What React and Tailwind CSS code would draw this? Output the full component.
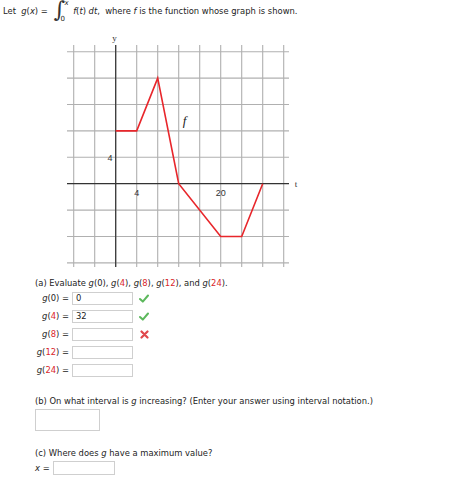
import React from 'react';

const R = ({ children }) => <span className="text-[#d9262b]">{children}</span>;
const G = () => <i>g</i>;

const Check = () => (
  <svg width="10" height="9" viewBox="0 0 10 9">
    <path d="M1 5 L3.8 7.6 L9 1.5" fill="none" stroke="#5cb85c" strokeWidth="2" strokeLinecap="round" strokeLinejoin="round" />
  </svg>
);

const Cross = () => (
  <svg width="9" height="9" viewBox="0 0 9 9">
    <path d="M1.5 1.5 L7.5 7.5 M7.5 1.5 L1.5 7.5" fill="none" stroke="#e0474c" strokeWidth="2.2" strokeLinecap="round" />
  </svg>
);

function Graph() {
  const vx = [73.7, 94.7, 115.7, 136.7, 157.7, 178.7, 199.7, 220.7, 241.7, 262.7, 283.7];
  const hy = [51.7, 78.1, 104.5, 130.9, 157.3, 210.1, 236.5, 262.9];
  return (
    <svg width="250" height="240" viewBox="60 30 250 240" className="block ml-[60px]">
      {vx.map(x => (
        <line key={'v' + x} x1={x} y1="45" x2={x} y2="267" stroke="#b0b0b0" strokeWidth="1.1" />
      ))}
      {hy.map(y => (
        <line key={'h' + y} x1="67" y1={y} x2="289" y2={y} stroke="#b0b0b0" strokeWidth="1.1" />
      ))}
      <line x1="115.7" y1="45" x2="115.7" y2="267" stroke="#333" strokeWidth="1.2" />
      <line x1="67" y1="183.7" x2="289" y2="183.7" stroke="#333" strokeWidth="1.2" />
      <polyline
        points="115.7,130.9 136.7,130.9 157.7,78.1 178.7,183.7 220.7,236.5 241.7,236.5 262.7,183.7"
        fill="none"
        stroke="#e8262b"
        strokeWidth="1.6"
        strokeLinejoin="miter"
      />
      <text x="114.5" y="41" fontSize="9" fontFamily="Liberation Serif, serif" textAnchor="middle" fill="#333">y</text>
      <text x="296" y="186.5" fontSize="9" fontFamily="Liberation Serif, serif" textAnchor="middle" fill="#333">t</text>
      <text x="112.5" y="160.5" fontSize="9" fontFamily="Liberation Sans, sans-serif" textAnchor="end" fill="#333">4</text>
      <text x="136.7" y="196" fontSize="9" fontFamily="Liberation Sans, sans-serif" textAnchor="middle" fill="#333">4</text>
      <text x="220.7" y="196" fontSize="9" fontFamily="Liberation Sans, sans-serif" textAnchor="middle" fill="#333">20</text>
      <text x="184.5" y="125" fontSize="13" fontStyle="italic" fontFamily="Liberation Serif, serif" textAnchor="middle" fill="#222">f</text>
    </svg>
  );
}

const Box = ({ value, className = '' }) => (
  <div className={`border border-[#cfcfcf] bg-white flex items-center pl-[3px] ${className}`}>{value}</div>
);

function Row({ label, value, mark }) {
  return (
    <div className="flex items-center h-[18px]">
      <div className="w-[37px] text-right pr-[3px] whitespace-nowrap">{label}</div>
      <Box value={value} className="w-[61px] h-[13px]" />
      <div className="w-[10px] ml-[6px] flex justify-center">{mark}</div>
    </div>
  );
}

export default function App() {
  return (
    <div className="w-[474px] h-[485px] bg-white overflow-hidden text-[8.4px] leading-[10px] text-[#222] font-['DejaVu_Sans',sans-serif]">
      {/* header */}
      <div className="h-[30px] flex items-start pt-[6px] pl-[3px] whitespace-nowrap">
        <span>Let&nbsp; <G />(<i>x</i>) =&nbsp;</span>
        <span className="relative inline-block w-[20px] h-[10px]">
          <span className="absolute left-[3px] top-[-9px] text-[22px] leading-[26px] font-['DejaVu_Serif',serif] italic text-[#333]">∫</span>
          <span className="absolute left-[14px] top-[-8px] text-[7px] italic">x</span>
          <span className="absolute left-[10px] top-[9px] text-[7px] leading-[8px]">0</span>
        </span>
        <span>&nbsp;<i>f</i>(<i>t</i>) <i>dt</i>,&nbsp; where <i>f</i> is the function whose graph is shown.</span>
      </div>

      <Graph />

      <div className="pl-[35px] pt-[8px]">
        <div>(a) Evaluate <G />(0), <G />(<R>4</R>), <G />(<R>8</R>), <G />(<R>12</R>), and <G />(<R>24</R>).</div>
        <div className="mt-[1px]">
          <Row label={<><G />(0) =</>} value="0" mark={<Check />} />
          <Row label={<><G />(<R>4</R>) =</>} value="32" mark={<Check />} />
          <Row label={<><G />(<R>8</R>) =</>} value="" mark={<Cross />} />
          <Row label={<><G />(<R>12</R>) =</>} value="" />
          <Row label={<><G />(<R>24</R>) =</>} value="" />
        </div>

        <div className="mt-[17px]">(b) On what interval is <G /> increasing? (Enter your answer using interval notation.)</div>
        <Box value="" className="mt-[3px] w-[65px] h-[22px]" />

        <div className="mt-[17px]">(c) Where does <G /> have a maximum value?</div>
        <div className="flex items-center mt-[2px] h-[15px]">
          <div className="w-[18px] whitespace-nowrap"><i>x</i> =</div>
          <Box value="" className="w-[62px] h-[14px]" />
        </div>
      </div>
    </div>
  );
}
